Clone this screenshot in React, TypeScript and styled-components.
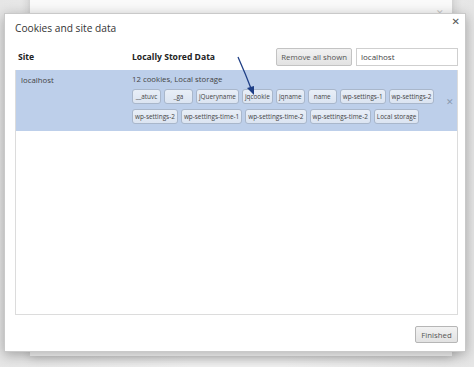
import { createGlobalStyle, styled } from "styled-components";

const GlobalStyle = createGlobalStyle`
    html, body {
        margin: 0;
        padding: 0;
        width: 474px;
        height: 367px;
        overflow: hidden;
        background: #ebebeb;
        font-family: "Open Sans", "Noto Sans", sans-serif;
    }
`;

const Desktop = styled.div`
    position: relative;
    width: 474px;
    height: 367px;
    background: linear-gradient(to right, #e6e6e6, #f1f1f1 40%, #f1f1f1 60%, #e6e6e6);
`;

const BackDialog = styled.div`
    position: absolute;
    left: 30px;
    top: -20px;
    width: 422px;
    height: 376px;
    background: #fafafa;
    box-shadow: 0 2px 10px rgba(0, 0, 0, 0.18);
`;

const BackClose = styled.span`
    position: absolute;
    right: 8px;
    top: 26px;
    font-size: 9px;
    color: #c8c8c8;
`;

const BackButton = styled.div`
    position: absolute;
    right: 12px;
    bottom: 3px;
    width: 42px;
    height: 10px;
    border-top: 1px solid #e2e2e2;
`;

const Dialog = styled.div`
    position: absolute;
    left: 4px;
    top: 13px;
    width: 462px;
    height: 339px;
    box-sizing: border-box;
    background: #fff;
    border: 1px solid #c9c9c9;
    box-shadow: 0 3px 12px rgba(0, 0, 0, 0.3);
    padding: 0 7px 0 10px;
    display: flex;
    flex-direction: column;
`;

const TitleBar = styled.div`
    display: flex;
    justify-content: space-between;
    align-items: flex-start;
    height: 33px;
`;

const Title = styled.div`
    margin-top: 7px;
    font-size: 10.2px;
    color: #333;
`;

const CloseX = styled.span`
    margin-top: 2px;
    margin-right: -2px;
    font-size: 10px;
    color: #555;
    font-family: "DejaVu Sans", sans-serif;
`;

const HeaderRow = styled.div`
    display: flex;
    align-items: center;
    height: 20px;
    padding-left: 3px;
    margin-bottom: 3px;
`;

const ColHead = styled.div<{ $width?: number }>`
    width: ${({ $width }) => ($width ? `${$width}px` : "auto")};
    flex-shrink: 0;
    flex-grow: ${({ $width }) => ($width ? 0 : 1)};
    font-size: 8.6px;
    font-weight: 700;
    color: #222;
`;

const GrayButton = styled.button`
    box-sizing: border-box;
    height: 18px;
    padding: 0 4px;
    border: 1px solid #c3c3c3;
    border-radius: 2px;
    background: linear-gradient(#f2f2f2, #e2e2e2);
    font-family: inherit;
    font-size: 7.8px;
    color: #555;
`;

const SearchInput = styled.div`
    box-sizing: border-box;
    width: 102px;
    height: 18px;
    margin-left: 4px;
    border: 1px solid #cfcfcf;
    padding: 0 4px;
    font-size: 8px;
    line-height: 16px;
    color: #444;
`;

const ListBox = styled.div`
    position: relative;
    height: 245px;
    border: 1px solid #dcdcdc;
    border-top: none;
    box-sizing: border-box;
`;

const SelectedRow = styled.div`
    display: flex;
    height: 61px;
    background: #bdcfea;
    padding: 5px 0 0 5px;
    box-sizing: border-box;
`;

const SiteCell = styled.div`
    width: 111px;
    flex-shrink: 0;
    font-size: 7.8px;
    color: #444;
`;

const DataCell = styled.div`
    flex-grow: 1;
    font-size: 7.8px;
    color: #444;
`;

const Summary = styled.div`
    height: 12px;
    margin-top: -1px;
`;

const ChipRow = styled.div<{ $first?: boolean }>`
    display: flex;
    gap: 3px;
    margin-top: ${({ $first }) => ($first ? "3px" : "5px")};
`;

const Chip = styled.span`
    box-sizing: border-box;
    min-width: 29px;
    height: 15px;
    padding: 0 2px;
    border: 1px solid #a9b7cb;
    border-radius: 3px;
    background: linear-gradient(#e8eef7, #dbe4f1);
    font-size: 6.4px;
    line-height: 13px;
    text-align: center;
    color: #444;
    white-space: nowrap;
`;

const RowRemove = styled.span`
    width: 11px;
    flex-shrink: 0;
    align-self: center;
    margin-top: -3px;
    font-family: "DejaVu Sans", sans-serif;
    font-size: 9px;
    color: #8a9ab0;
`;

const Footer = styled.div`
    display: flex;
    justify-content: flex-end;
    margin-top: 11px;
`;

const FinishButton = styled(GrayButton)`
    height: 17px;
    width: 43px;
    padding: 0;
    border-color: #b6b6b6;
`;

const Pointer = styled.svg`
    position: absolute;
    left: 232px;
    top: 55px;
    overflow: visible;
`;

const rowOne = ["__atuvc", "_ga", "jQueryname", "jqcookie", "jqname", "name", "wp-settings-1", "wp-settings-2"];
const rowTwo = ["wp-settings-2", "wp-settings-time-1", "wp-settings-time-2", "wp-settings-time-2", "Local storage"];

const App = () => {
    return (
        <Desktop>
            <GlobalStyle />
            <BackDialog>
                <BackClose>✕</BackClose>
                <BackButton />
            </BackDialog>
            <Dialog>
                <TitleBar>
                    <Title>Cookies and site data</Title>
                    <CloseX>✕</CloseX>
                </TitleBar>
                <HeaderRow>
                    <ColHead $width={114}>Site</ColHead>
                    <ColHead>Locally Stored Data</ColHead>
                    <GrayButton>Remove all shown</GrayButton>
                    <SearchInput>localhost</SearchInput>
                </HeaderRow>
                <ListBox>
                    <SelectedRow>
                        <SiteCell>localhost</SiteCell>
                        <DataCell>
                            <Summary>12 cookies, Local storage</Summary>
                            <ChipRow $first>
                                {rowOne.map((c, i) => (
                                    <Chip key={i}>{c}</Chip>
                                ))}
                            </ChipRow>
                            <ChipRow>
                                {rowTwo.map((c, i) => (
                                    <Chip key={i}>{c}</Chip>
                                ))}
                            </ChipRow>
                        </DataCell>
                        <RowRemove>✕</RowRemove>
                    </SelectedRow>
                </ListBox>
                <Footer>
                    <FinishButton>Finished</FinishButton>
                </Footer>
            </Dialog>
            <Pointer width="30" height="45" viewBox="0 0 30 45">
                <path d="M6 2 Q 14 20 20 36" stroke="#1f3f86" strokeWidth="1.3" fill="none" />
                <path d="M15 33 L22 40 L22 31 Z" fill="#1f3f86" />
            </Pointer>
        </Desktop>
    );
};

export default App;
